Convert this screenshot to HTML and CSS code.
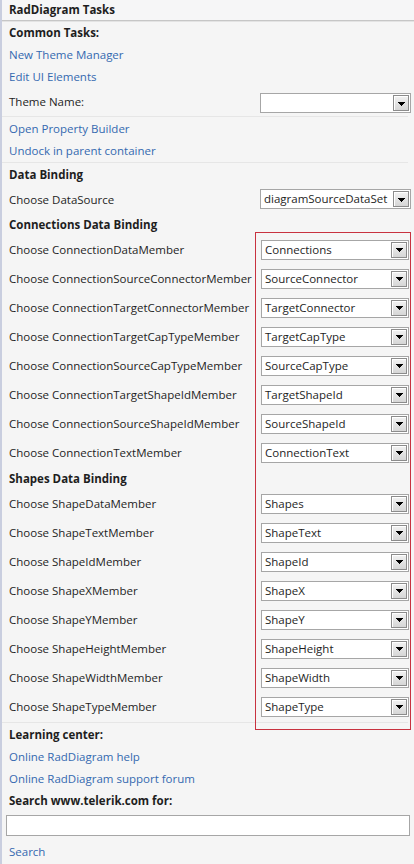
FILE: index.html
```html
<!DOCTYPE html>
<html>
<head>
<meta charset="utf-8">
<link rel="stylesheet" href="styles.css">
</head>
<body>
<div class="panel">
  <div class="header">RadDiagram Tasks</div>

  <div class="section sec-common">
    <div class="row heading">Common Tasks:</div>
    <div class="row"><a class="link">New Theme Manager</a></div>
    <div class="row"><a class="link">Edit UI Elements</a></div>
    <div class="row row-combo row-theme">
      <span class="label">Theme Name:</span>
      <div class="combo"><span class="combo-text"></span><span class="combo-btn"><svg width="7" height="4" viewBox="0 0 7 4"><polygon points="0,0 7,0 3.5,4" fill="#000"/></svg></span></div>
    </div>
  </div>

  <div class="section sec-undock">
    <div class="row"><a class="link">Open Property Builder</a></div>
    <div class="row"><a class="link">Undock in parent container</a></div>
  </div>

  <div class="section sec-data">
    <div class="row heading">Data Binding</div>
    <div class="row row-combo row-ds">
      <span class="label">Choose DataSource</span>
      <div class="combo"><span class="combo-text">diagramSourceDataSet</span><span class="combo-btn"><svg width="7" height="4" viewBox="0 0 7 4"><polygon points="0,0 7,0 3.5,4" fill="#000"/></svg></span></div>
    </div>
    <div class="row heading">Connections Data Binding</div>
    <div class="row row-member"><span class="label">Choose ConnectionDataMember</span><div class="combo combo-in"><span class="combo-text">Connections</span><span class="combo-btn"><svg width="7" height="4" viewBox="0 0 7 4"><polygon points="0,0 7,0 3.5,4" fill="#000"/></svg></span></div></div>
    <div class="row row-member"><span class="label">Choose ConnectionSourceConnectorMember</span><div class="combo combo-in"><span class="combo-text">SourceConnector</span><span class="combo-btn"><svg width="7" height="4" viewBox="0 0 7 4"><polygon points="0,0 7,0 3.5,4" fill="#000"/></svg></span></div></div>
    <div class="row row-member"><span class="label">Choose ConnectionTargetConnectorMember</span><div class="combo combo-in"><span class="combo-text">TargetConnector</span><span class="combo-btn"><svg width="7" height="4" viewBox="0 0 7 4"><polygon points="0,0 7,0 3.5,4" fill="#000"/></svg></span></div></div>
    <div class="row row-member"><span class="label">Choose ConnectionTargetCapTypeMember</span><div class="combo combo-in"><span class="combo-text">TargetCapType</span><span class="combo-btn"><svg width="7" height="4" viewBox="0 0 7 4"><polygon points="0,0 7,0 3.5,4" fill="#000"/></svg></span></div></div>
    <div class="row row-member"><span class="label">Choose ConnectionSourceCapTypeMember</span><div class="combo combo-in"><span class="combo-text">SourceCapType</span><span class="combo-btn"><svg width="7" height="4" viewBox="0 0 7 4"><polygon points="0,0 7,0 3.5,4" fill="#000"/></svg></span></div></div>
    <div class="row row-member"><span class="label">Choose ConnectionTargetShapeIdMember</span><div class="combo combo-in"><span class="combo-text">TargetShapeId</span><span class="combo-btn"><svg width="7" height="4" viewBox="0 0 7 4"><polygon points="0,0 7,0 3.5,4" fill="#000"/></svg></span></div></div>
    <div class="row row-member"><span class="label">Choose ConnectionSourceShapeIdMember</span><div class="combo combo-in"><span class="combo-text">SourceShapeId</span><span class="combo-btn"><svg width="7" height="4" viewBox="0 0 7 4"><polygon points="0,0 7,0 3.5,4" fill="#000"/></svg></span></div></div>
    <div class="row row-member"><span class="label">Choose ConnectionTextMember</span><div class="combo combo-in"><span class="combo-text">ConnectionText</span><span class="combo-btn"><svg width="7" height="4" viewBox="0 0 7 4"><polygon points="0,0 7,0 3.5,4" fill="#000"/></svg></span></div></div>
    <div class="row heading">Shapes Data Binding</div>
    <div class="row row-member"><span class="label">Choose ShapeDataMember</span><div class="combo combo-in"><span class="combo-text">Shapes</span><span class="combo-btn"><svg width="7" height="4" viewBox="0 0 7 4"><polygon points="0,0 7,0 3.5,4" fill="#000"/></svg></span></div></div>
    <div class="row row-member"><span class="label">Choose ShapeTextMember</span><div class="combo combo-in"><span class="combo-text">ShapeText</span><span class="combo-btn"><svg width="7" height="4" viewBox="0 0 7 4"><polygon points="0,0 7,0 3.5,4" fill="#000"/></svg></span></div></div>
    <div class="row row-member"><span class="label">Choose ShapeIdMember</span><div class="combo combo-in"><span class="combo-text">ShapeId</span><span class="combo-btn"><svg width="7" height="4" viewBox="0 0 7 4"><polygon points="0,0 7,0 3.5,4" fill="#000"/></svg></span></div></div>
    <div class="row row-member"><span class="label">Choose ShapeXMember</span><div class="combo combo-in"><span class="combo-text">ShapeX</span><span class="combo-btn"><svg width="7" height="4" viewBox="0 0 7 4"><polygon points="0,0 7,0 3.5,4" fill="#000"/></svg></span></div></div>
    <div class="row row-member"><span class="label">Choose ShapeYMember</span><div class="combo combo-in"><span class="combo-text">ShapeY</span><span class="combo-btn"><svg width="7" height="4" viewBox="0 0 7 4"><polygon points="0,0 7,0 3.5,4" fill="#000"/></svg></span></div></div>
    <div class="row row-member"><span class="label">Choose ShapeHeightMember</span><div class="combo combo-in"><span class="combo-text">ShapeHeight</span><span class="combo-btn"><svg width="7" height="4" viewBox="0 0 7 4"><polygon points="0,0 7,0 3.5,4" fill="#000"/></svg></span></div></div>
    <div class="row row-member"><span class="label">Choose ShapeWidthMember</span><div class="combo combo-in"><span class="combo-text">ShapeWidth</span><span class="combo-btn"><svg width="7" height="4" viewBox="0 0 7 4"><polygon points="0,0 7,0 3.5,4" fill="#000"/></svg></span></div></div>
    <div class="row row-member"><span class="label">Choose ShapeTypeMember</span><div class="combo combo-in"><span class="combo-text">ShapeType</span><span class="combo-btn"><svg width="7" height="4" viewBox="0 0 7 4"><polygon points="0,0 7,0 3.5,4" fill="#000"/></svg></span></div></div>
  </div>

  <div class="section sec-learn">
    <div class="row heading">Learning center:</div>
    <div class="row"><a class="link">Online RadDiagram help</a></div>
    <div class="row"><a class="link">Online RadDiagram support forum</a></div>
    <div class="row heading">Search www.telerik.com for:</div>
    <div class="search-row"><div class="search-box"></div></div>
    <div class="row"><a class="link">Search</a></div>
  </div>

  <div class="highlight"></div>
</div>
</body>
</html>
```

FILE: styles.css
```css
html, body {
  margin: 0;
  padding: 0;
  background: #f5f5f5;
}

.panel {
  position: relative;
  width: 414px;
  height: 864px;
  box-sizing: border-box;
  border-left: 2px solid #c9cedf;
  background: #f5f5f5;
  font-family: "Open Sans", "Noto Sans", sans-serif;
  font-size: 11.5px;
  color: #1e1e1e;
  overflow: hidden;
}

.header {
  height: 20px;
  line-height: 20px;
  padding-left: 7px;
  font-weight: bold;
  background: #f6f6f7;
  border-bottom: 1px solid #c6c6c6;
  box-shadow: 0 1px 0 #e3e3e3;
}

.section {
  margin-right: 6px;
  border-bottom: 1px solid #e6e6e6;
}

.sec-undock {
  padding-bottom: 1px;
}

.sec-data {
  padding-bottom: 1px;
}

.sec-learn {
  border-bottom: none;
}

.row {
  height: 22px;
  display: flex;
  align-items: center;
  justify-content: space-between;
  padding-left: 7px;
  white-space: nowrap;
}

.heading {
  font-weight: bold;
}

.link {
  color: #3469b0;
  cursor: pointer;
}

.row-theme {
  height: 29px;
  align-items: flex-start;
  padding-top: 6px;
  box-sizing: border-box;
}

.row-theme .label {
  line-height: 18px;
}

.row-ds {
  height: 28px;
}

.row-member {
  height: 29px;
}

.combo {
  display: flex;
  align-items: center;
  width: 151px;
  height: 20px;
  box-sizing: border-box;
  margin-right: 3px;
  margin-right: -3px;
  background: #fff;
  border: 1px solid #a6a6a6;
}

.combo-in {
  width: 148px;
  margin-right: -1px;
}

.combo-text {
  flex: 1;
  padding-left: 3px;
  line-height: 18px;
  overflow: hidden;
}

.combo-btn {
  width: 16px;
  height: 16px;
  box-sizing: border-box;
  margin-right: 1px;
  border: 1px solid #8c8c8c;
  background: linear-gradient(#f2f2f2, #d6d6d6);
  box-shadow: inset 1px 1px 0 #ffffff;
  display: flex;
  align-items: center;
  justify-content: center;
}

.combo-btn svg {
  display: block;
  shape-rendering: crispEdges;
  margin-top: 1px;
}

.search-row {
  padding: 4px 0 4px 4px;
}

.search-box {
  height: 21px;
  box-sizing: border-box;
  background: #fff;
  border: 1px solid #a6a6a6;
  margin-right: -2px;
}

.highlight {
  position: absolute;
  left: 253px;
  top: 232px;
  width: 156px;
  height: 498px;
  box-sizing: border-box;
  border: 1px solid #c8323f;
  pointer-events: none;
}
```
